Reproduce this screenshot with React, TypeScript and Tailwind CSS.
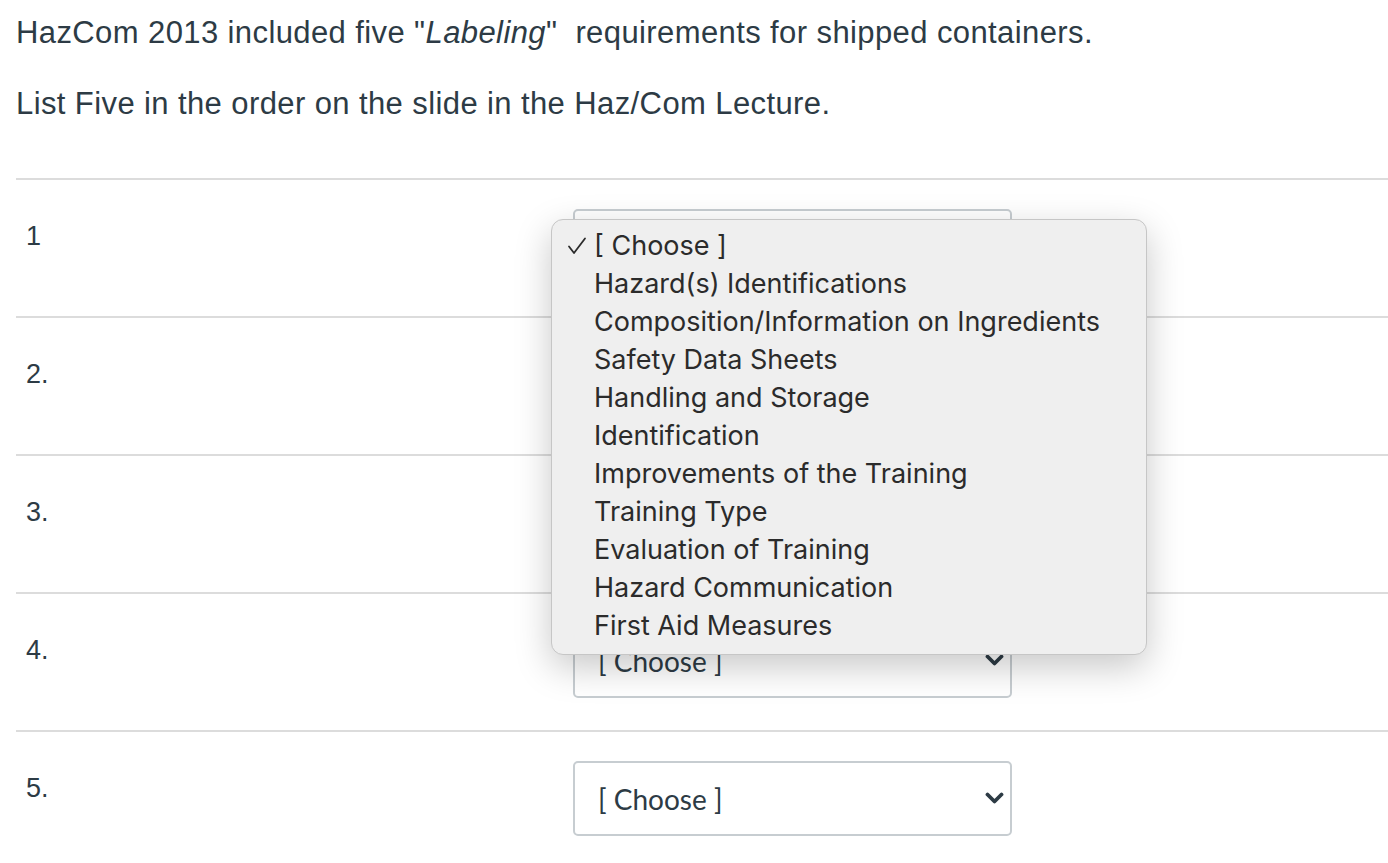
import React from 'react';

const options = [
  '[ Choose ]',
  'Hazard(s) Identifications',
  'Composition/Information on Ingredients',
  'Safety Data Sheets',
  'Handling and Storage',
  'Identification',
  'Improvements of the Training',
  'Training Type',
  'Evaluation of Training',
  'Hazard Communication',
  'First Aid Measures',
];

const rows = ['1', '2.', '3.', '4.', '5.'];

const Chevron: React.FC = () => (
  <svg width="19" height="13" viewBox="0 0 19 13" fill="none">
    <path d="M2.5 2.5l7 7 7-7" stroke="#2d3b45" strokeWidth="3.8" strokeLinecap="round" strokeLinejoin="round" />
  </svg>
);

const SelectBox: React.FC = () => (
  <div className="w-[439px] h-[75px] rounded-[5px] border-2 border-[#c7cdd1] bg-white flex items-center justify-between pl-[23px] pr-[6px]">
    <span className="text-[28px] text-[#2d3b45]" style={{ fontFamily: 'Lato, sans-serif' }}>[ Choose ]</span>
    <Chevron />
  </div>
);

const Menu: React.FC = () => (
  <div
    className="absolute left-[-22px] top-[39px] z-10 w-[596px] rounded-[12px] border border-[#c6c6c6] bg-[#efefef] pt-[7px] pb-[9px] shadow-[0_12px_36px_rgba(0,0,0,0.22)]"
    style={{ fontFamily: 'Inter, sans-serif' }}
  >
    {options.map((o, i) => (
      <div key={o} className="flex items-center h-[38px] text-[27px] text-[#2b2b2b]">
        <div className="w-[42px] flex justify-end pr-[7px]">
          {i === 0 && (
            <svg width="20" height="18" viewBox="0 0 20 18" fill="none">
              <path d="M2 9.5l5 6.5L18 1.5" stroke="#2b2b2b" strokeWidth="1.8" strokeLinecap="round" strokeLinejoin="round" />
            </svg>
          )}
        </div>
        <span>{o}</span>
      </div>
    ))}
  </div>
);

export default function App() {
  return (
    <div className="min-h-[863px] bg-white pl-4 text-[#2d3b45]" style={{ fontFamily: '"Liberation Sans", Arial, sans-serif' }}>
      <p className="pt-[12px] text-[31px] leading-[42px] tracking-[0.4px]">
        HazCom 2013 included five "<em>Labeling</em>"&nbsp; requirements for shipped containers.
      </p>
      <p className="mt-[29px] text-[31px] leading-[42px] tracking-[0.4px]">List Five in the order on the slide in the Haz/Com Lecture.</p>

      <div className="mt-[53px]">
        {rows.map((r, i) => (
          <div key={r} className="flex h-[138px] border-t-2 border-[#dcdcdc]">
            <div className="w-[557px] pl-[10px] pt-[35px] text-[27px] leading-[42px]">{r}</div>
            <div className="relative pt-[29px]">
              <SelectBox />
              {i === 0 && <Menu />}
            </div>
          </div>
        ))}
      </div>
    </div>
  );
}
